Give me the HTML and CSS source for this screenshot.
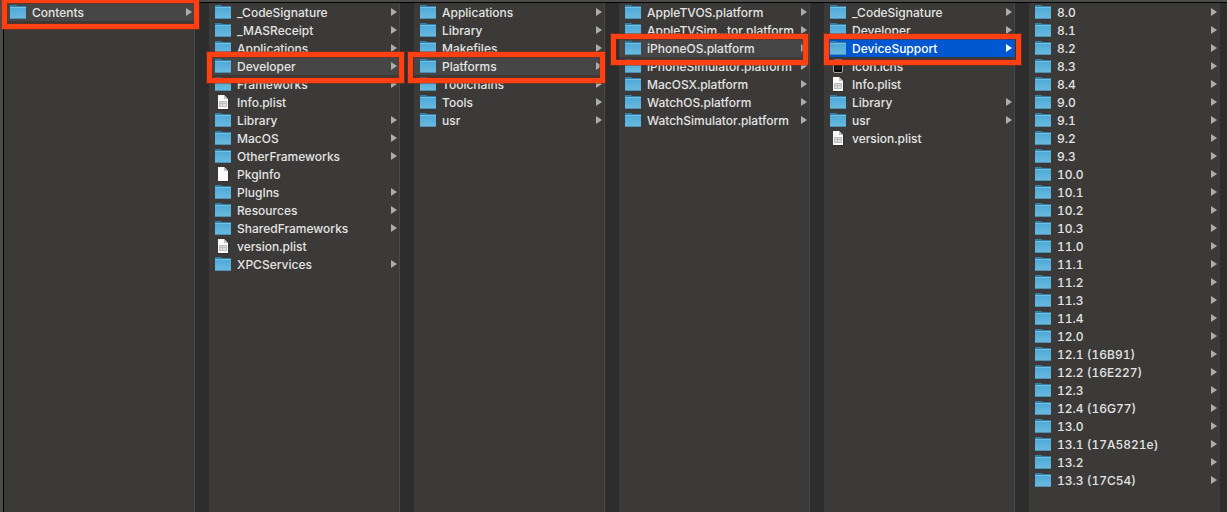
FILE: index.html
```html
<!DOCTYPE html>
<html lang="en">
<head>
    <meta charset="UTF-8">
    <meta name="viewport" content="width=device-width, initial-scale=1.0">
    <title>DeviceSupport</title>
    <link rel="stylesheet" href="styles.css">
</head>
<body>
    <svg class="symbols" aria-hidden="true">
        <defs>
            <linearGradient id="folderFill" x1="0" y1="0" x2="0" y2="1">
                <stop offset="0" stop-color="#4ba9d8"/>
                <stop offset="1" stop-color="#6dbade"/>
            </linearGradient>
        </defs>
        <symbol id="folder" viewBox="0 0 16 16">
            <path d="M0 1h6l1.5 1H16v2H0z" fill="#347fa5"/>
            <path d="M0 3h16v12H0z" fill="url(#folderFill)"/>
            <path d="M0 3h16v1H0z" fill="#72c0e4"/>
            <path d="M0 14h16v1H0z" fill="#4c91b3"/>
        </symbol>
        <symbol id="file" viewBox="0 0 16 16">
            <path d="M3 1h7l4 4v11H3z" fill="#262626" opacity=".5"/>
            <path d="M3 1h6l4 4v10H3z" fill="#fbfbfb"/>
            <path d="M9 1l4 4H9z" fill="#c4c4c4"/>
        </symbol>
        <symbol id="plist" viewBox="0 0 16 16">
            <use href="#file"/>
            <path d="M4 7h8v6H4z" fill="#bdbdbd"/>
            <path d="M5 8h2v1H5zM8 8h3v1H8zM5 10h2v2H5zM8 10h3v2H8z" fill="#dedede"/>
        </symbol>
        <symbol id="icns" viewBox="0 0 16 16">
            <rect x="3.5" y="1.5" width="9" height="13" rx="1.5" fill="#050505" stroke="#a5a5a5"/>
            <path d="M5 3h6v9H5z" fill="#1c1c1c"/>
        </symbol>
        <symbol id="arrow" viewBox="0 0 6 8">
            <path d="M0 0l6 4-6 4z" fill="currentColor"/>
        </symbol>
    </svg>

    <main class="browser" id="browser"></main>

    <script>
        const columns = [
            { selected: "Contents", items: ["Contents"] },
            {
                selected: "Developer",
                items: ["_CodeSignature", "_MASReceipt", "Applications", "Developer", "Frameworks",
                    "Info.plist", "Library", "MacOS", "OtherFrameworks", "PkgInfo", "PlugIns",
                    "Resources", "SharedFrameworks", "version.plist", "XPCServices"]
            },
            {
                selected: "Platforms",
                items: ["Applications", "Library", "Makefiles", "Platforms", "Toolchains", "Tools", "usr"]
            },
            {
                selected: "iPhoneOS.platform",
                items: ["AppleTVOS.platform", "AppleTVSim...tor.platform", "iPhoneOS.platform",
                    "iPhoneSimulator.platform", "MacOSX.platform", "WatchOS.platform",
                    "WatchSimulator.platform"]
            },
            {
                selected: "DeviceSupport",
                active: true,
                items: ["_CodeSignature", "Developer", "DeviceSupport", "icon.icns", "Info.plist",
                    "Library", "usr", "version.plist"]
            },
            {
                items: ["8.0", "8.1", "8.2", "8.3", "8.4", "9.0", "9.1", "9.2", "9.3", "10.0", "10.1",
                    "10.2", "10.3", "11.0", "11.1", "11.2", "11.3", "11.4", "12.0", "12.1 (16B91)",
                    "12.2 (16E227)", "12.3", "12.4 (16G77)", "13.0", "13.1 (17A5821e)", "13.2",
                    "13.3 (17C54)"]
            }
        ];

        function iconFor(name) {
            if (name.endsWith(".plist")) return "plist";
            if (name.endsWith(".icns")) return "icns";
            if (name === "PkgInfo") return "file";
            return "folder";
        }

        function row(name, column) {
            const icon = iconFor(name);
            const selected = name === column.selected;
            let classes = "row";
            if (selected) classes += column.active ? " selected active" : " selected";

            return `<li class="${classes}">
                <svg class="icon"><use href="#${icon}"/></svg>
                <span class="name">${name}</span>
                ${icon === "folder" ? '<svg class="arrow"><use href="#arrow"/></svg>' : ""}
                ${selected ? '<span class="mark"></span>' : ""}
            </li>`;
        }

        document.getElementById("browser").innerHTML = columns.map(column =>
            `<ul class="column">${column.items.map(name => row(name, column)).join("")}</ul>`
        ).join("");
    </script>
</body>
</html>
```
FILE: styles.css
```css
* {
    box-sizing: border-box;
}

body {
    margin: 0;
    min-height: 100vh;
    display: flex;
    overflow: hidden;
    background: #4b4b4a;
    color: #e4e4e3;
    font-family: Inter, "Liberation Sans", sans-serif;
    font-size: 12px;
    font-weight: 500;
    line-height: 18px;
    font-variant-numeric: tabular-nums;
}

.symbols {
    position: absolute;
    width: 0;
    height: 0;
}

.browser {
    flex: 1;
    min-width: 0;
    display: flex;
    margin: 2px 0 0 3px;
    border-top: 1px solid #000;
    border-left: 1px solid #000;
    background: #3b3a38;
}

.column {
    flex: 1 0 205px;
    margin: 0;
    padding: 0;
    list-style: none;
    border-right: 14px solid #2d2d2d;
}

/* thin divider beside the gutter */
.column:not(:last-child) {
    box-shadow: inset -1px 0 #484847;
}

.row {
    position: relative;
    display: flex;
    align-items: center;
    height: 18px;
    padding: 0 3px 0 6px;
}

.row.selected {
    background: #464646;
}

.row.active {
    background: #0058d0;
    color: #fff;
}

.icon {
    width: 16px;
    height: 16px;
    flex: none;
}

.name {
    flex: 1;
    margin-left: 6px;
    padding-top: 2px;
    white-space: nowrap;
}

.arrow {
    width: 6px;
    height: 8px;
    flex: none;
    color: #adadac;
}

.active .arrow {
    color: #fff;
}

/* Red frames round the selected path */
.mark {
    position: absolute;
    z-index: 1;
    top: -5px;
    left: -2px;
    width: 197px;
    height: 31px;
    border: 5px solid #ff4013;
    box-shadow: 0 0 0 1px rgba(150, 45, 20, 0.5), inset 0 0 0 1px rgba(120, 40, 20, 0.5);
}

.column:nth-child(3) .mark {
    left: -6px;
}

.column:nth-child(4) .mark {
    left: -8px;
}

.column:nth-child(5) .mark {
    left: 0;
}
```
